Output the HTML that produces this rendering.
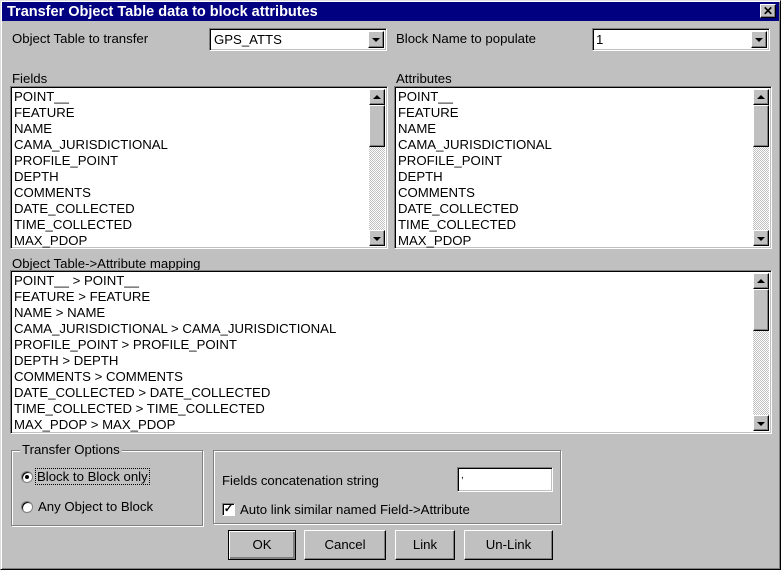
<!DOCTYPE html><html><head><style>
*{box-sizing:border-box;margin:0;padding:0}
body{width:781px;height:570px;background:#c0c0c0;font:13.2px "Liberation Sans",sans-serif;color:#000;position:relative;overflow:hidden}
.a{position:absolute}
.win{left:0;top:0;width:781px;height:570px;border:1px solid;border-color:#dfdfdf #000 #000 #dfdfdf;box-shadow:inset 1px 1px #fff,inset -1px -1px #808080}
.title{left:2px;top:2px;width:777px;height:19px;background:#000080;color:#fff;font-weight:bold;font-size:14.5px;padding:2px 0 0 5px}
.xb{left:760px;top:4px;width:16px;height:14px;background:#c0c0c0;border:1px solid;border-color:#fff #000 #000 #fff;box-shadow:inset -1px -1px #808080;font-size:12px;font-weight:bold;color:#000;text-align:center;line-height:12px}
.sunk{background:#fff;border:1px solid;border-color:#808080 #fff #fff #808080;box-shadow:inset 1px 1px #000,inset -1px -1px #c0c0c0}
.btn{background:#c0c0c0;border:1px solid;border-color:#fff #000 #000 #fff;box-shadow:inset -1px -1px #808080;text-align:center}
.list>div:not(.sb){height:16px;line-height:16px;padding-left:3px;white-space:nowrap}
.sb{position:absolute;right:2px;top:2px;bottom:2px;width:16px;background:repeating-conic-gradient(#fff 0 25%,#c0c0c0 0 50%) 0 0/2px 2px}
.sb .btn{position:absolute;left:0;width:16px;height:16px}
.tri{width:0;height:0;border-left:4px solid transparent;border-right:4px solid transparent;margin:5px auto 0}
.up{border-bottom:4px solid #000}.dn{border-top:4px solid #000}
.grp{border:1px solid #808080;box-shadow:1px 1px #fff,inset 1px 1px #fff}
</style></head><body>
<div class="a win"></div>
<div class="a title">Transfer Object Table data to block attributes</div>
<div class="a xb">✕</div>

<div class="a" style="left:12px;top:31px">Object Table to transfer</div>
<div class="a sunk" style="left:209px;top:28px;width:178px;height:23px;padding:3px 0 0 4px">GPS_ATTS<div class="a btn" style="right:2px;top:2px;width:16px;height:17px"><div class="tri dn" style="margin-top:6px"></div></div></div>
<div class="a" style="left:396px;top:31px">Block Name to populate</div>
<div class="a sunk" style="left:592px;top:28px;width:178px;height:23px;padding:3px 0 0 3px">1<div class="a btn" style="right:2px;top:2px;width:16px;height:17px"><div class="tri dn" style="margin-top:6px"></div></div></div>

<div class="a" style="left:12px;top:71px">Fields</div>
<div class="a" style="left:396px;top:71px">Attributes</div>
<div class="a" style="left:12px;top:256px">Object Table-&gt;Attribute mapping</div>

<div class="a sunk list" style="left:10px;top:86px;width:378px;height:163px;padding-top:2px">
<div>POINT__</div><div>FEATURE</div><div>NAME</div><div>CAMA_JURISDICTIONAL</div><div>PROFILE_POINT</div><div>DEPTH</div><div>COMMENTS</div><div>DATE_COLLECTED</div><div>TIME_COLLECTED</div><div>MAX_PDOP</div>
<div class="sb"><div class="btn" style="top:0"><div class="tri up"></div></div><div class="btn" style="top:16px;height:42px"></div><div class="btn" style="bottom:0"><div class="tri dn" style="margin-top:6px"></div></div></div></div>

<div class="a sunk list" style="left:394px;top:86px;width:378px;height:163px;padding-top:2px">
<div>POINT__</div><div>FEATURE</div><div>NAME</div><div>CAMA_JURISDICTIONAL</div><div>PROFILE_POINT</div><div>DEPTH</div><div>COMMENTS</div><div>DATE_COLLECTED</div><div>TIME_COLLECTED</div><div>MAX_PDOP</div>
<div class="sb"><div class="btn" style="top:0"><div class="tri up"></div></div><div class="btn" style="top:16px;height:42px"></div><div class="btn" style="bottom:0"><div class="tri dn" style="margin-top:6px"></div></div></div></div>

<div class="a sunk list" style="left:10px;top:270px;width:762px;height:164px;padding-top:2px">
<div>POINT__ &gt; POINT__</div><div>FEATURE &gt; FEATURE</div><div>NAME &gt; NAME</div><div>CAMA_JURISDICTIONAL &gt; CAMA_JURISDICTIONAL</div><div>PROFILE_POINT &gt; PROFILE_POINT</div><div>DEPTH &gt; DEPTH</div><div>COMMENTS &gt; COMMENTS</div><div>DATE_COLLECTED &gt; DATE_COLLECTED</div><div>TIME_COLLECTED &gt; TIME_COLLECTED</div><div>MAX_PDOP &gt; MAX_PDOP</div>
<div class="sb"><div class="btn" style="top:0"><div class="tri up"></div></div><div class="btn" style="top:16px;height:42px"></div><div class="btn" style="bottom:0"><div class="tri dn" style="margin-top:6px"></div></div></div></div>

<div class="a grp" style="left:11px;top:450px;width:192px;height:76px"></div>
<div class="a" style="left:20px;top:442px;background:#c0c0c0;padding:0 2px">Transfer Options</div>
<div class="a" style="left:21px;top:471px;width:12px;height:12px;border-radius:50%;background:#fff;border:1px solid #808080;box-shadow:inset 1px 1px #000"><div style="width:4px;height:4px;border-radius:50%;background:#000;margin:3px"></div></div>
<div class="a" style="left:36px;top:469px;outline:1px dotted #000;padding:0 1px">Block to Block only</div>
<div class="a" style="left:21px;top:501px;width:12px;height:12px;border-radius:50%;background:#fff;border:1px solid #808080;box-shadow:inset 1px 1px #000"></div>
<div class="a" style="left:38px;top:499px">Any Object to Block</div>

<div class="a grp" style="left:213px;top:450px;width:348px;height:74px"></div>
<div class="a" style="left:222px;top:473px">Fields concatenation string</div>
<div class="a sunk" style="left:457px;top:467px;width:96px;height:25px;padding:2px 0 0 3px;font-size:10px">,</div>
<div class="a" style="left:222px;top:503px;width:13px;height:13px;background:#fff;border:1px solid;border-color:#808080 #fff #fff #808080;box-shadow:inset 1px 1px #000;font-size:11px;line-height:11px;text-align:center;font-weight:bold">✓</div>
<div class="a" style="left:240px;top:502px">Auto link similar named Field-&gt;Attribute</div>

<div class="a btn" style="left:228px;top:530px;width:68px;height:30px;border:1px solid #000;box-shadow:inset 1px 1px #fff,inset -2px -2px #808080;line-height:27px">OK</div>
<div class="a btn" style="left:304px;top:530px;width:82px;height:30px;line-height:27px">Cancel</div>
<div class="a btn" style="left:395px;top:530px;width:60px;height:30px;line-height:27px">Link</div>
<div class="a btn" style="left:464px;top:530px;width:89px;height:30px;line-height:27px">Un-Link</div>
</body></html>
